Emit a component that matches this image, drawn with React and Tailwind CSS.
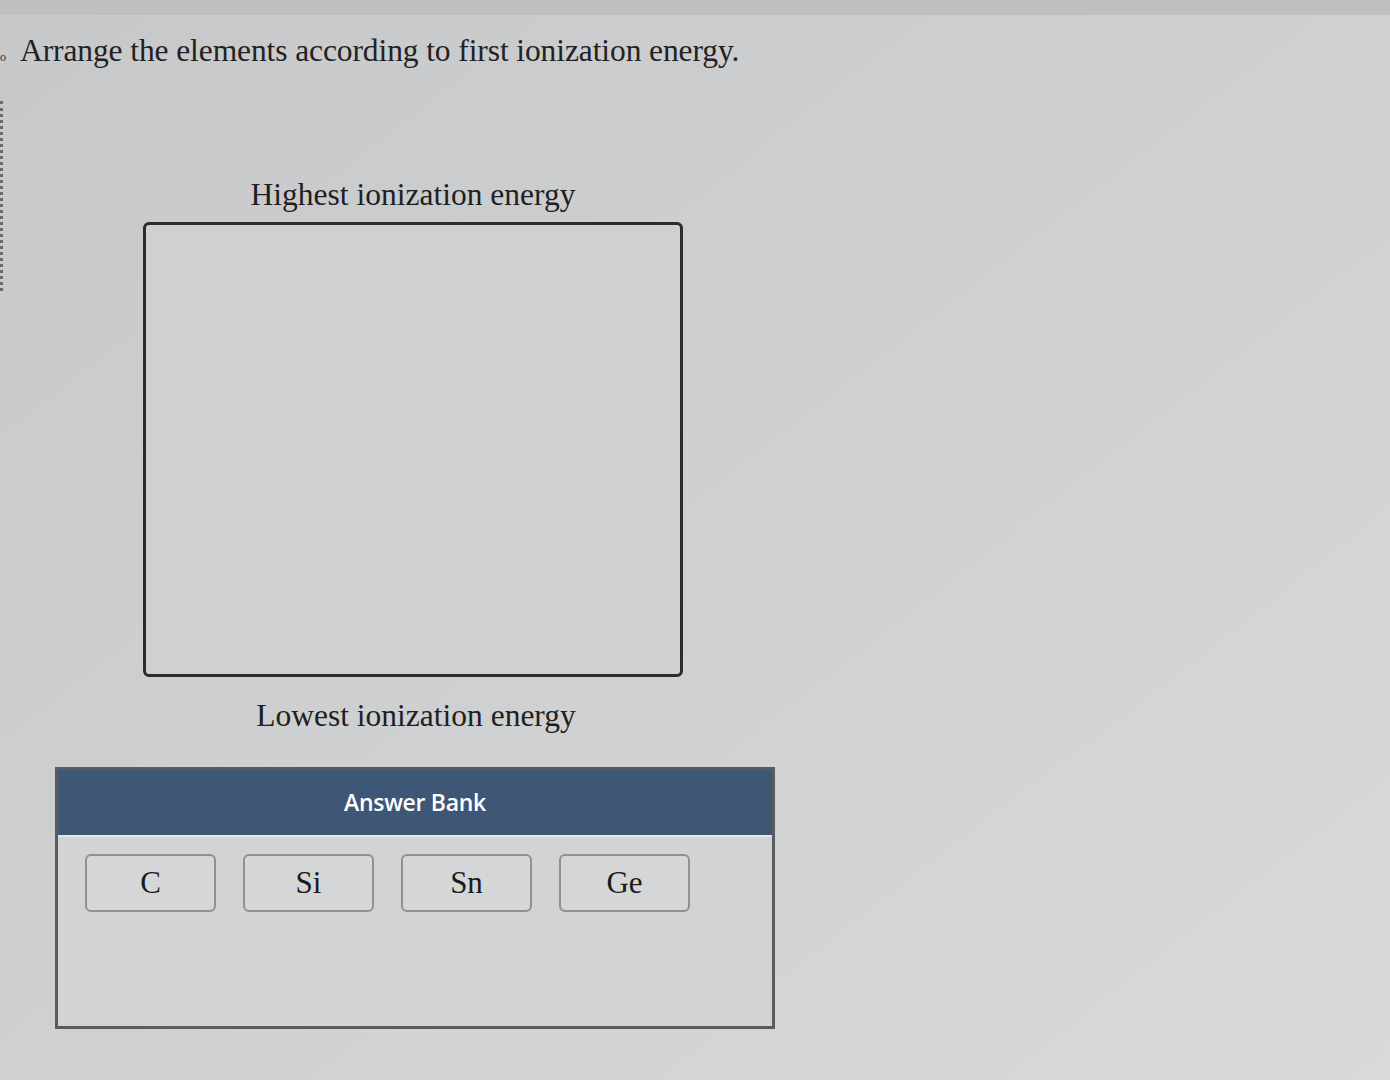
import React from 'react';

const serif = { fontFamily: '"Liberation Serif", "Times New Roman", serif' };

const elements = ['C', 'Si', 'Sn', 'Ge'];

const ElementTile = ({ label }) => (
  <button
    className="w-[131px] h-[58px] rounded-[6px] border-2 border-[#8f9092] bg-[#d5d6d7] text-[31px] text-[#1b1b1b] flex items-center justify-center"
    style={serif}
  >
    {label}
  </button>
);

export default function App() {
  return (
    <div className="w-[1390px] h-[1080px] overflow-hidden bg-gradient-to-br from-[#c7c8c9] via-[#cfd0d1] to-[#d8d9db] flex flex-col">
      <div className="h-[15px] bg-[#bebfc0]" />

      <div className="flex flex-1">
        {/* left gutter with the question marker */}
        <div className="w-[8px] flex flex-col items-start">
          <span className="mt-[36px] text-[12px] leading-none text-[#333]" style={serif}>o</span>
          <div className="mt-[38px] h-[190px] w-[3px] border-l-[3px] border-dotted border-[#6a6a6a]" />
        </div>

        <div className="flex-1 pl-[12px]">
          <h1 className="mt-[17px] text-[31.5px] leading-[38px] text-[#222] tracking-[-0.1px]" style={serif}>
            Arrange the elements according to first ionization energy.
          </h1>

          <div className="ml-[35px] mt-[106px] w-[720px] flex flex-col">
            {/* ranking drop zone */}
            <div className="ml-[88px] w-[540px] flex flex-col items-center">
              <div className="text-[31.5px] leading-[38px] text-[#1f1f1f]" style={serif}>Highest ionization energy</div>
              <div className="mt-[8px] w-[540px] h-[455px] border-[3px] border-[#2b2c2e] rounded-[6px] bg-[#d0d0d1]" />
              <div className="mt-[20px] text-[31.5px] leading-[38px] text-[#1f1f1f] translate-x-[3px]" style={serif}>Lowest ionization energy</div>
            </div>

            {/* answer bank */}
            <div className="mt-[32px] w-[720px] h-[262px] border-[3px] border-[#5a5b5d] bg-[#d2d3d4] flex flex-col">
              <div
                className="h-[65px] bg-[#3f5776] flex items-center justify-center text-white text-[23px] font-semibold tracking-[-0.3px]"
                style={{ fontFamily: '"Open Sans", "Noto Sans", sans-serif' }}
              >
                Answer Bank
              </div>
              <div className="h-[2px] bg-[#e6e7e8]" />
              <div className="pl-[27px] pt-[17px] flex gap-[27px]">
                {elements.map((el) => (
                  <ElementTile key={el} label={el} />
                ))}
              </div>
            </div>
          </div>
        </div>
      </div>
    </div>
  );
}
